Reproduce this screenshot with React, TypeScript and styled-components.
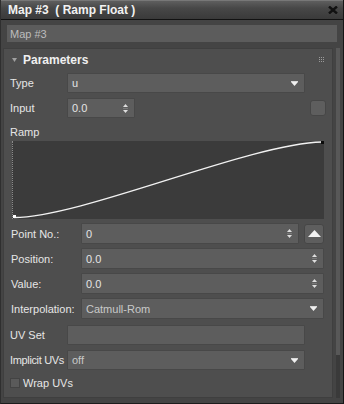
import styled, { createGlobalStyle } from 'styled-components';

const GlobalStyle = createGlobalStyle`
  html, body {
    margin: 0;
    padding: 0;
    background: #444444;
  }
  body {
    font-family: "Liberation Sans", Arial, sans-serif;
    font-size: 11px;
    color: #e4e4e4;
  }
`;

const Window = styled.div`
  width: 344px;
  height: 404px;
  box-sizing: border-box;
  display: flex;
  flex-direction: column;
  background: #444444;
  border-left: 1px solid #2f2f2f;
  border-right: 1px solid #151515;
  border-bottom: 1px solid #1c1c1c;
`;

const TitleBar = styled.div`
  flex: none;
  display: flex;
  align-items: center;
  justify-content: space-between;
  padding: 0 5px 0 7px;
  background: linear-gradient(#5e5e5e, #474747 40%, #3a3a3a);
  border-top: 1px solid #777777;
  border-bottom: 1px solid #121212;
  box-sizing: border-box;
  height: 20px;
  font-size: 12px;
  font-weight: bold;
  color: #f2f2f2;
  white-space: pre;
`;

const NameField = styled.div`
  margin: 5px 6px 0 6px;
  height: 17px;
  flex: none;
  box-sizing: border-box;
  padding-left: 3px;
  display: flex;
  align-items: center;
  background: #5c5c5c;
  color: #bdbdbd;
`;

const Body = styled.div`
  flex: 1;
  display: flex;
  margin: 6px 0 5px 2px;
  min-height: 0;
`;

const Panel = styled.div`
  width: 330px;
  box-sizing: border-box;
  background: #4e4e4e;
  border: 1px solid #3f3f3f;
  display: flex;
  flex-direction: column;
  padding: 0 0 0 5px;
`;

const ScrollTrack = styled.div`
  width: 4px;
  margin-left: 3px;
  background: #3a3a3a;
  display: flex;
  flex-direction: column;
`;

const ScrollThumb = styled.div`
  height: 307px;
  background: #585858;
`;

const Header = styled.div`
  height: 21px;
  display: flex;
  align-items: center;
  gap: 6px;
  padding: 0 8px 0 1px;
  font-size: 12px;
  font-weight: bold;
  color: #f0f0f0;
`;

const HeaderTitle = styled.span`
  flex: 1;
`;

const Row = styled.div<{ $top: number; $h?: number }>`
  display: flex;
  align-items: center;
  margin-top: ${(p) => p.$top}px;
  height: ${(p) => p.$h ?? 20}px;
`;

const Label = styled.div<{ $w: number; $pad?: number; $tight?: boolean }>`
  width: ${(p) => p.$w}px;
  flex: none;
  padding-left: ${(p) => p.$pad ?? 0}px;
  box-sizing: border-box;
  color: #e6e6e6;
  white-space: nowrap;
  letter-spacing: ${(p) => (p.$tight ? '-0.35px' : 'normal')};
`;

const Field = styled.div<{ $w: number; $dim?: boolean }>`
  width: ${(p) => p.$w}px;
  height: 100%;
  flex: none;
  box-sizing: border-box;
  display: flex;
  align-items: center;
  justify-content: space-between;
  padding: 0 6px 0 4px;
  background: #5d5d5d;
  border: 1px solid #484848;
  border-radius: 1px;
  color: ${(p) => (p.$dim ? '#c9c9c9' : '#e4e4e4')};
`;

const SquareButton = styled.div<{ $size: number; $ml: number }>`
  width: ${(p) => p.$size}px;
  height: ${(p) => p.$size}px;
  margin-left: ${(p) => p.$ml}px;
  flex: none;
  box-sizing: border-box;
  display: flex;
  align-items: center;
  justify-content: center;
  background: #5e5e5e;
  border: 1px solid #464646;
  border-radius: 3px;
`;

const RampLabel = styled.div`
  margin-top: 4px;
  height: 19px;
  display: flex;
  align-items: center;
  padding-left: 1px;
  color: #e6e6e6;
`;

const Graph = styled.div`
  margin-left: 3px;
  width: 312px;
  height: 78px;
  background: #3b3b3b;
  border-left: 1px dotted #8a8a8a;
  box-sizing: border-box;
  flex: none;
`;

const CheckRow = styled.div`
  display: flex;
  align-items: center;
  gap: 3px;
  margin-top: 7px;
  height: 11px;
  padding-left: 1px;
  color: #e6e6e6;
`;

const CheckBox = styled.div`
  width: 10px;
  height: 10px;
  box-sizing: border-box;
  background: #5a5a5a;
  border: 1px solid #434343;
`;

const DropArrow = () => (
  <svg width="7" height="5" viewBox="0 0 7 5">
    <rect x="0" y="0" width="7" height="1" fill="#d8d8d8" />
    <polygon points="0,1 7,1 3.5,5" fill="#f0f0f0" />
  </svg>
);

const SpinArrows = () => (
  <svg width="5" height="9" viewBox="0 0 5 9">
    <polygon points="2.5,0 5,3 0,3" fill="#dedede" />
    <rect x="0" y="4" width="5" height="1" fill="#7a7a7a" />
    <polygon points="0,6 5,6 2.5,9" fill="#dedede" />
  </svg>
);

const Grip = () => (
  <svg width="5" height="5" viewBox="0 0 5 5">
    {[0, 2, 4].map((y) =>
      [0, 2, 4].map((x) => <rect key={`${x}-${y}`} x={x} y={y} width="1" height="1" fill="#9a9a9a" />)
    )}
  </svg>
);

const CloseIcon = () => (
  <svg width="10" height="8" viewBox="0 0 10 8">
    <path d="M1 0.5 L9 7.5 M9 0.5 L1 7.5" stroke="#111" strokeWidth="2.4" />
  </svg>
);

const RampCurve = () => (
  <svg width="311" height="78" viewBox="0 0 311 78" style={{ display: 'block' }}>
    <path d="M1 76.5 C 70 76, 235 3, 309 1" fill="none" stroke="#f2f2f2" strokeWidth="1.3" />
    <rect x="0" y="74" width="3" height="3" fill="#ffffff" />
    <rect x="308" y="0" width="3" height="3" fill="#0a0a0a" />
  </svg>
);

export default function App() {
  return (
    <>
      <GlobalStyle />
      <Window>
        <TitleBar>
          <span>{'Map #3  ( Ramp Float )'}</span>
          <CloseIcon />
        </TitleBar>
        <NameField>Map #3</NameField>
        <Body>
          <Panel>
            <Header>
              <svg width="5" height="4" viewBox="0 0 5 4" style={{ marginLeft: 2 }}>
                <polygon points="0,0 5,0 2.5,4" fill="#a0a0a0" />
              </svg>
              <HeaderTitle>Parameters</HeaderTitle>
              <Grip />
            </Header>

            <Row $top={3}>
              <Label $w={58} $pad={1}>Type</Label>
              <Field $w={238}>
                <span>u</span>
                <DropArrow />
              </Field>
            </Row>
            <Row $top={5}>
              <Label $w={58} $pad={1}>Input</Label>
              <Field $w={68}>
                <span>0.0</span>
                <SpinArrows />
              </Field>
              <SquareButton $size={16} $ml={175} />
            </Row>

            <RampLabel>Ramp</RampLabel>
            <Graph>
              <RampCurve />
            </Graph>

            <Row $top={4} $h={21}>
              <Label $w={72} $pad={2}>Point No.:</Label>
              <Field $w={218}>
                <span>0</span>
                <SpinArrows />
              </Field>
              <SquareButton $size={20} $ml={5}>
                <svg width="13" height="7" viewBox="0 0 13 7">
                  <polygon points="6.5,0 13,7 0,7" fill="#f2f2f2" />
                </svg>
              </SquareButton>
            </Row>
            <Row $top={4} $h={21}>
              <Label $w={72} $pad={2}>Position:</Label>
              <Field $w={243}>
                <span>0.0</span>
                <SpinArrows />
              </Field>
            </Row>
            <Row $top={4} $h={21}>
              <Label $w={72} $pad={2}>Value:</Label>
              <Field $w={243}>
                <span>0.0</span>
                <SpinArrows />
              </Field>
            </Row>
            <Row $top={4} $h={21}>
              <Label $w={72} $pad={2}>Interpolation:</Label>
              <Field $w={243} $dim>
                <span>Catmull-Rom</span>
                <DropArrow />
              </Field>
            </Row>

            <Row $top={6}>
              <Label $w={58} $pad={1}>UV Set</Label>
              <Field $w={238} />
            </Row>
            <Row $top={5}>
              <Label $w={58} $pad={1} $tight>Implicit UVs</Label>
              <Field $w={238} $dim>
                <span>off</span>
                <DropArrow />
              </Field>
            </Row>
            <CheckRow>
              <CheckBox />
              <span>Wrap UVs</span>
            </CheckRow>
          </Panel>
          <ScrollTrack>
            <ScrollThumb />
          </ScrollTrack>
        </Body>
      </Window>
    </>
  );
}
